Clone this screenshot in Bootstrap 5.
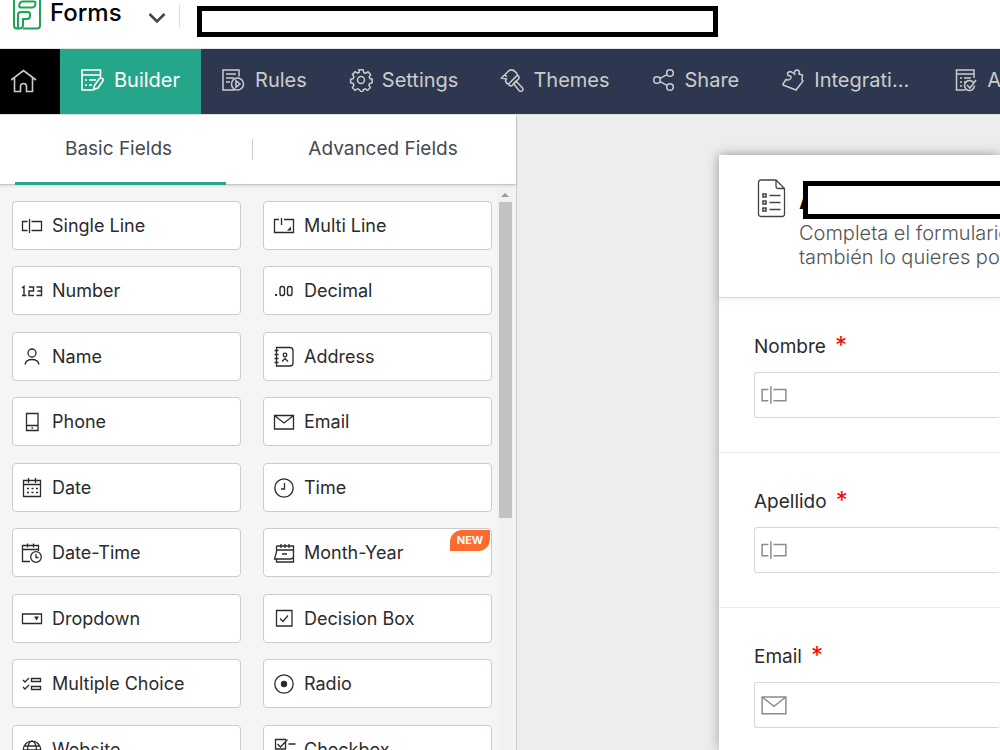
<!DOCTYPE html>
<html lang="en">
<head>
<meta charset="utf-8">
<meta name="viewport" content="width=device-width, initial-scale=1">
<title>Forms - Builder</title>
<link href="https://cdn.jsdelivr.net/npm/bootstrap@5.3.0/dist/css/bootstrap.min.css" rel="stylesheet">
<style>
  body { font-family: Inter, "Liberation Sans", sans-serif; font-size: 18px; line-height: 24px; color: #2b2b2b; }
  svg { fill: none; stroke: currentColor; flex: none; display: block; }
  .app { height: 100vh; }
  .topbar { height: 49px; border-bottom: 1px solid #e4e4e4; padding-left: 12px; }
  .brand { font-size: 24px; line-height: 28px; color: #000; font-weight: 500; gap: 8px; margin-top: -22px; }
  .brand svg { color: #1ea455; margin-top: -3px; }
  .switcher { color: #444; margin: -12px 0 0 26px; }
  .rule { width: 1px; height: 24px; background: #ddd; margin-top: -17px; margin-left: 13px; }
  .redacted { border: 5px solid #000; background: #fff; }
  .topbar .redacted { width: 521px; height: 31px; margin-left: 17px; margin-top: -5px; }
  .mainnav { height: 66px; background: #2d3850; border-bottom: 1px solid #dfe0e2; }
  .mainnav a { color: #ccc; text-decoration: none; padding: 0 21px 4px; gap: 9px; font-size: 20px; flex: none; white-space: nowrap; }
  .mainnav a.home { width: 60px; padding: 0 11px 2px; background: #000; }
  .mainnav a.active { background: #25a68a; color: #fff; }
  .clip { max-width: 98px; }
  .panel { width: 517px; flex: none; background: #f4f6f6; border-right: 1px solid #ccc; }
  .tabs { height: 70px; background: #fff; border-bottom: 1px solid #c9c6c9; box-shadow: 0 1px 3px rgba(0,0,0,.12); z-index: 1; }
  .tabs button { border: 0; background: none; color: #444a50; font-size: 19px; padding: 0; }
  .tabs .basic { width: 211px; margin-left: 15px; margin-bottom: -1px; padding-top: 1px; padding-right: 4px; border-bottom: 3px solid #25a68a; }
  .tabs .advanced { padding-top: 1px; padding-bottom: 2px; padding-right: 3px; }
  .tabs .rule { margin: -1px 0 0 26px; height: 21px; background: #ccc; }
  .tiles { display: grid; grid-template-columns: 1fr 1fr; grid-auto-rows: 49px 50px; gap: 16px 22px; padding: 16px 5px 16px 12px; }
  .tile { border: 1px solid #cbcdcd; border-radius: 4px; background: #fff; color: #2b2b2b; font-size: 18px; text-align: left; padding: 0 7px; gap: 8px; height: 49px; }
  .tile:nth-child(even) { padding-left: 8px; }
  .newtag { top: 1px; right: 1px; background: #ff6a2e; color: #fff; font-size: 11px; line-height: 21px; font-weight: 700; width: 40px; text-align: center; border-radius: 12px 0 12px 0; }
  .track { width: 16px; margin-right: 3px; background: #f1f1f1; }
  .track svg { margin: 7px auto 5px; }
  .thumb { width: 13px; height: 316px; background: #c1c1c1; margin: 0 auto; }
  .stage { background: #ededed; padding: 40px 0 0 202px; }
  .sheet { background: #fff; box-shadow: 0 0 12px rgba(0,0,0,.32); }
  .sheethead { height: 143px; border-bottom: 1px solid #d5d7d8; box-shadow: 0 1px 8px rgba(0,0,0,.08); padding: 23px 0 0 38px; gap: 13px; }
  .sheethead svg { color: #444; }
  .sheethead h1 { font-size: 24px; line-height: 30px; font-weight: 700; color: #000; margin: 8px 0 5px; }
  .sheethead p { font-weight: 300; color: #555; white-space: nowrap; font-size: 20px; margin: 0; }
  .sheethead .redacted { left: 4px; right: -40px; top: 3px; height: 38px; }
  .entry { height: 155px; border-bottom: 1px solid #ececec; padding: 37px 0 0 35px; flex: none; }
  .entry label { font-size: 19px; gap: 9px; height: 24px; margin-bottom: 13px; }
  .star { color: #f00; font-size: 24px; line-height: 22px; }
  .entry input { height: 46px; border: 1px solid #d8d8d8; border-radius: 3px; width: 100%; padding-left: 40px; border-right: 0; }
  .entry svg { position: absolute; left: 5px; top: 8px; color: #8c8c8c; }
</style>
</head>
<body>
<svg width="0" height="0" class="position-absolute">
  <symbol id="i-single" viewBox="0 0 24 24"><path d="M7.500 7.500H2.500v9h5M11.500 7.500h10v9h-10M9.500 5v14"/></symbol>
  <symbol id="i-mail" viewBox="0 0 24 24"><path d="M2.500 5.500h19v13.500h-19zM3 6l9 7 9-7"/></symbol>
</svg>
<div class="app d-flex flex-column overflow-hidden">
  <header class="topbar d-flex align-items-center flex-shrink-0">
    <a href="#" class="brand d-flex align-items-center text-decoration-none">
      <svg width="30" height="36" viewBox="0 0 30 36" stroke-width="2"><path d="M6 34.500H5Q2 34.500 2 31.500V5Q2 3 5 3h20q3 0 3 3v25.500q0 3-3 3H11"/><path d="M6 34.500V21q0-3 3-3h7q2 0 2 2v2q0 3-3 3h-4v6q0 3-3 3.500zM8.500 13.500q-2-1-1-3.500 1-2.500 3-2.500h11q2.500 0 2 2-.5 4-3 4z"/></svg>
      Forms</a>
    <button type="button" class="switcher btn p-0 border-0" aria-label="Switch app"><svg width="18" height="12" viewBox="0 0 18 12" stroke-width="2.500"><path d="M1.500 2l7.500 7.500L16.500 2"/></svg></button>
    <div class="rule"></div>
    <div class="redacted"></div>
  </header>
  <nav class="mainnav d-flex flex-shrink-0 overflow-hidden">
    <a href="#" class="home d-flex align-items-center" aria-label="Home"><svg width="26" height="26" viewBox="0 0 26 26" stroke-width="1.600"><path d="M0 12L12.500 2.500 25 12M3.500 9.500V23.500h6v-5a3 3 0 0 1 6 0v5h6V9.500"/></svg></a>
    <a href="#" class="active d-flex align-items-center"><svg width="24" height="24" viewBox="0 0 24 24" stroke-width="1.600"><path d="M19.500 9V2H1v20h12M1 7h18.500M4 12h2M8 12h7M4 17h2M8 17h3M13.500 17.500l4.500-6.500q2-2 4 0 .5 1-.5 2.500L17 20l-4.500 1.500z"/></svg><span>Builder</span></a>
    <a href="#" class="d-flex align-items-center"><svg width="24" height="24" viewBox="0 0 24 24" stroke-width="1.500"><path d="M17 8.500V2H1v20h12M4 6h10M4 10h8M4 14h4"/><circle cx="15.500" cy="16" r="6"/><path d="M14 12.800v6.400l4-3.200z"/></svg><span>Rules</span></a>
    <a href="#" class="d-flex align-items-center"><svg width="24" height="24" viewBox="0 0 24 24" stroke-width="1.500"><circle cx="12" cy="12" r="3.500"/><path d="M10 1.800h4l.7 2.700 1.800.8 2.500-1.500 2.600 2.700-1.400 2.500.7 1.600 2.300.6v3.600l-2.600.8-.7 1.600 1.400 2.500-2.700 2.600-2.500-1.400-1.700.7-.7 2-1.700.1-1.700-2.100-1.700-.7-2.500 1.400-2.600-2.600 1.400-2.500-.7-1.700-2.600-.7v-3.600l2.600-.7.7-1.600-1.400-2.500 2.600-2.700 2.500 1.500 1.700-.8z"/></svg><span>Settings</span></a>
    <a href="#" class="d-flex align-items-center"><svg width="24" height="24" viewBox="0 0 24 24" stroke-width="1.500"><path d="M1.500 10l7-7q4-3 8 2l1 2-9 9q-2 0-3-3l1-2zM5 7.500l2 1M17.500 7q2.500 2 1 4l-7 7Q9 18 8.500 16M13.500 15.500l2.500-2.500 6.500 7q1 2-.5 3t-3-.5z"/></svg><span>Themes</span></a>
    <a href="#" class="d-flex align-items-center"><svg width="24" height="24" viewBox="0 0 24 24" stroke-width="1.500"><circle cx="5" cy="12" r="3.300"/><circle cx="18" cy="5" r="3.300"/><circle cx="18" cy="19" r="3.300"/><path d="M8 10.300l7-3.700M8 13.700l7 3.700"/></svg><span>Share</span></a>
    <a href="#" class="d-flex align-items-center"><svg width="24" height="24" viewBox="0 0 24 24" stroke-width="1.500"><path d="M2 16l3-4.500q3.500 1.500 5-1.500.5-2.500-3-2.500L6.500 5q2-2.500 5-.5l2 1.500Q13 2 16.500 2q3 1 1.500 4l3.500 1-.5 4.500 1 1.500-7 9L2 17z"/></svg><span class="clip text-truncate">Integrations</span></a>
    <a href="#" class="d-flex align-items-center"><svg width="24" height="24" viewBox="0 0 24 24" stroke-width="1.500"><path d="M20 10V2H2.500v20h9M2.500 6H20M6 10h2M10 10h7M6 14h2M10 14h3M6 18h2"/><path d="M19.500 14.500a5 5 0 1 0 1 3M13 17l3 3 6-8"/></svg><span>Approvals</span></a>
  </nav>
  <div class="d-flex flex-grow-1 overflow-hidden">
    <aside class="panel d-flex flex-column">
      <div class="tabs d-flex flex-shrink-0 align-items-stretch">
        <button type="button" class="basic">Basic Fields</button>
        <div class="rule align-self-center"></div>
        <button type="button" class="advanced flex-grow-1">Advanced Fields</button>
      </div>
      <div class="d-flex flex-grow-1 overflow-hidden">
        <div class="tiles flex-grow-1">
          <button type="button" class="tile d-flex align-items-center"><svg width="24" height="24" stroke-width="1.300"><use href="#i-single"/></svg>Single Line</button>
          <button type="button" class="tile d-flex align-items-center"><svg width="24" height="24" stroke-width="1.300"><path d="M7 5.500H2.500v13h19v-13H12M9.500 4v7"/><path d="M19 12.500v4h-4z" fill="currentColor" stroke="none"/></svg>Multi Line</button>
          <button type="button" class="tile d-flex align-items-center"><svg width="24" height="24" stroke-width="1.400"><path d="M2 9l2-1.500v9M2 16.500h4.500M9 8h4.500v4H9v4.500h5M16.500 8h5v8.500h-5M17.500 12h4"/></svg>Number</button>
          <button type="button" class="tile d-flex align-items-center"><svg width="24" height="24" stroke-width="1.400"><path d="M3 16h2" stroke-width="2"/><rect x="8" y="7.500" width="4.500" height="9" rx="2"/><rect x="15.500" y="7.500" width="4.500" height="9" rx="2"/></svg>Decimal</button>
          <button type="button" class="tile d-flex align-items-center"><svg width="24" height="24" stroke-width="1.300"><circle cx="12" cy="8" r="4"/><path d="M5 19.500q1-5 7-5t7 5"/></svg>Name</button>
          <button type="button" class="tile d-flex align-items-center"><svg width="24" height="24" stroke-width="1.300"><path d="M4.500 2.500H18q3 0 3 3V18q0 3-3 3H4.500zM2.500 5.500h4M2.500 9.500h4M2.500 13.500h4M2.500 17.500h4"/><circle cx="13" cy="10" r="1.800"/><path d="M10 16.500l3-3 3 3"/></svg>Address</button>
          <button type="button" class="tile d-flex align-items-center"><svg width="24" height="24" stroke-width="1.300"><path d="M6.500 3.500h11.500v17H6.500zM6.500 15.500H18M11.500 18h1.500"/></svg>Phone</button>
          <button type="button" class="tile d-flex align-items-center"><svg width="24" height="24" stroke-width="1.300"><use href="#i-mail"/></svg>Email</button>
          <button type="button" class="tile d-flex align-items-center"><svg width="24" height="24" stroke-width="1.300"><path d="M3.500 4.500h17v16h-17zM3.500 8.500h17M8.500 2v5M15.500 2v5"/><path d="M7 12.500h11M7 16.500h11" stroke-width="1.600" stroke-dasharray="2 2.500"/></svg>Date</button>
          <button type="button" class="tile d-flex align-items-center"><svg width="24" height="24" stroke-width="1.300"><circle cx="12" cy="12" r="9.200"/><path d="M12.500 7v6H9"/></svg>Time</button>
          <button type="button" class="tile d-flex align-items-center"><svg width="24" height="24" stroke-width="1.300"><path d="M10 20.500H2.500v-16h16V10M2.500 8.500h16M7.500 2.500v4M13.500 2.500v4"/><circle cx="16" cy="16" r="5.300"/><path d="M16 13v3.500h2.500"/></svg>Date-Time</button>
          <button type="button" class="tile d-flex align-items-center position-relative"><svg width="24" height="24" stroke-width="1.300"><path d="M4.500 5h17v16h-17v-3M4.500 9h17M9 3v4M13 3v4M17 3v4M4.500 5v6l-2 7h16.500q2 0 2.500-3M10 13h5"/></svg>Month-Year<span class="newtag position-absolute">NEW</span></button>
          <button type="button" class="tile d-flex align-items-center"><svg width="24" height="24" stroke-width="1.300"><path d="M2.500 7h19v9.500h-19z"/><path d="M14 9.500h5l-2.500 4z" fill="currentColor" stroke="none"/></svg>Dropdown</button>
          <button type="button" class="tile d-flex align-items-center"><svg width="24" height="24" stroke-width="1.300"><path d="M4.500 3.500h15.500v15.500h-15.500zM8 11.500l3 3 5-6"/></svg>Decision Box</button>
          <button type="button" class="tile d-flex align-items-center"><svg width="24" height="24" stroke-width="1.300"><path d="M3 8l2 2 4-4M3 15l2 2 4-4M11.500 6.500h9v3h-9zM11.500 14.500h9v3h-9z"/></svg>Multiple Choice</button>
          <button type="button" class="tile d-flex align-items-center"><svg width="24" height="24" stroke-width="1.300"><circle cx="12" cy="12" r="9.200"/><circle cx="12" cy="12" r="3.200" fill="currentColor" stroke="none"/></svg>Radio</button>
          <button type="button" class="tile d-flex align-items-center"><svg width="24" height="24" stroke-width="1.300"><circle cx="12" cy="12" r="8.800"/><ellipse cx="12" cy="12" rx="4.500" ry="8.800"/><path d="M4.500 8h15M3 12h18M4.500 16h15"/></svg>Website</button>
          <button type="button" class="tile d-flex align-items-center"><svg width="24" height="24" stroke-width="1.300"><path d="M14 1.500H3.500v9.500H13.500V4M5.500 6l3 3L15.500 1.500M16.500 6h7M3.500 14h10v9h-10zM16.500 18h7"/></svg>Checkbox</button>
        </div>
        <div class="track flex-shrink-0"><svg width="8" height="5" viewBox="0 0 8 5"><path d="M0 5l4-4 4 4z" fill="#999" stroke="none"/></svg><div class="thumb"></div></div>
      </div>
    </aside>
    <main class="stage flex-grow-1 overflow-hidden">
      <form class="sheet h-100 d-flex flex-column">
        <div class="sheethead d-flex flex-shrink-0">
          <svg width="29" height="40" viewBox="0 0 29 40" stroke-width="1.300"><path d="M3.500 2H19l8.500 8.500V36q0 2.500-2.500 2.500H4Q1.500 38.500 1.500 36V4.500Q1.500 2 4 2M19 2v6q0 2.500 2.500 2.500h6M12.500 17.500h11M12.500 24.500h11M12.500 31.500h11"/><path d="M6 16h3v3H6zM6 23h3v3H6zM6 30h3v3H6z" stroke-width="1.600"/></svg>
          <div class="position-relative flex-grow-1">
            <h1>A</h1>
            <div class="redacted position-absolute"></div>
            <p>Completa el formulario<br>también lo quieres por</p>
          </div>
        </div>
        <div class="entry">
          <label for="nombre" class="d-flex">Nombre <span class="star">*</span></label>
          <div class="position-relative"><input id="nombre" type="text"><svg width="30" height="30" stroke-width="1.200"><use href="#i-single"/></svg></div>
        </div>
        <div class="entry">
          <label for="apellido" class="d-flex">Apellido <span class="star">*</span></label>
          <div class="position-relative"><input id="apellido" type="text"><svg width="30" height="30" stroke-width="1.200"><use href="#i-single"/></svg></div>
        </div>
        <div class="entry">
          <label for="email" class="d-flex">Email <span class="star">*</span></label>
          <div class="position-relative"><input id="email" type="email"><svg width="30" height="30" stroke-width="1.200"><use href="#i-mail"/></svg></div>
        </div>
      </form>
    </main>
  </div>
</div>
<script src="https://cdn.jsdelivr.net/npm/bootstrap@5.3.0/dist/js/bootstrap.bundle.min.js"></script>
</body>
</html>
